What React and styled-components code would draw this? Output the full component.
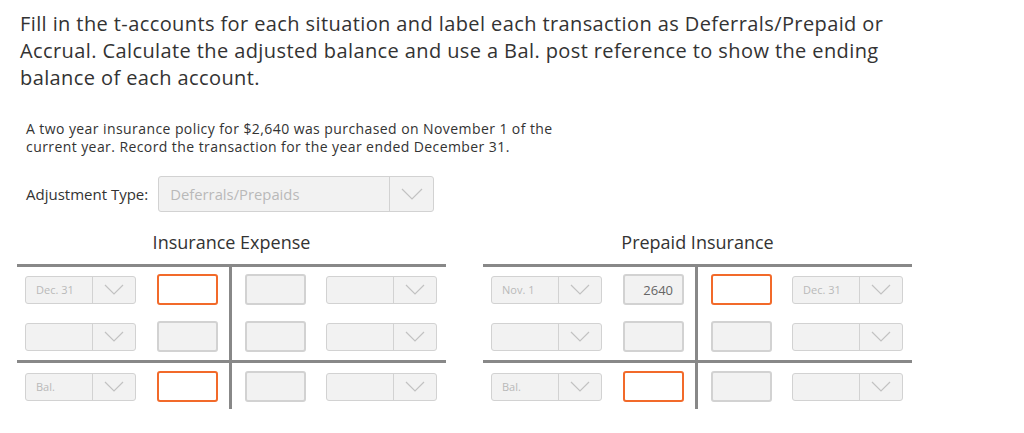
import React from "react";
import styled, { createGlobalStyle } from "styled-components";

const Global = createGlobalStyle`
  html, body { margin: 0; padding: 0; background: #fff; }
  body { font-family: "Open Sans", "Noto Sans", sans-serif; color: #333; }
`;

const Page = styled.div`
  width: 1024px;
  height: 433px;
  box-sizing: border-box;
  padding: 10px 0 0 20px;
  overflow: hidden;
`;

const Heading = styled.p`
  margin: 0;
  width: 890px;
  font-size: 20px;
  line-height: 27px;
  letter-spacing: 0.4px;
  color: #333;
`;

const Problem = styled.p`
  margin: 29px 0 0 6px;
  width: 560px;
  font-size: 14px;
  line-height: 18px;
  letter-spacing: 0.42px;
  color: #333;
`;

const AdjustRow = styled.div`
  display: flex;
  align-items: center;
  gap: 10px;
  margin: 20px 0 0 6px;
`;

const Label = styled.span`
  font-size: 15px;
  color: #333;
`;

const Select = styled.div`
  display: flex;
  width: ${(p) => p.$w}px;
  height: ${(p) => p.$h}px;
  box-sizing: border-box;
  border: 1.5px solid #d2d2d2;
  border-radius: 3px;
  background: #f2f2f2;
`;

const SelectText = styled.div`
  flex: 1;
  display: flex;
  align-items: center;
  padding-left: ${(p) => p.$pad}px;
  font-size: ${(p) => p.$fs}px;
  color: #b9b9b9;
  white-space: nowrap;
`;

const ArrowBox = styled.div`
  width: ${(p) => p.$w}px;
  border-left: 1.5px solid #d2d2d2;
  display: flex;
  align-items: center;
  justify-content: center;
`;

const Accounts = styled.div`
  display: flex;
  gap: 37px;
  margin: 18px 0 0 -3px;
`;

const Account = styled.div`
  width: 429px;
  display: flex;
  flex-direction: column;
`;

const Title = styled.div`
  text-align: center;
  font-size: 18px;
  line-height: 24px;
  color: #333;
  margin-bottom: 10px;
  padding-left: 0px;
`;

const Section = styled.div`
  display: grid;
  grid-template-columns: 212px 217px;
  border-top: 3px solid #888;
`;

const Half = styled.div`
  display: flex;
  flex-direction: column;
  gap: 16px;
  padding: ${(p) => p.$pt}px ${(p) => (p.$right ? 9 : 11)}px ${(p) => p.$pb}px
    ${(p) => (p.$right ? 13 : 8)}px;
  border-left: ${(p) => (p.$right ? "3px solid #888" : "none")};
`;

const Row = styled.div`
  display: flex;
  align-items: center;
  gap: ${(p) => (p.$right ? 20 : 21)}px;
  height: 31px;
`;

const Input = styled.div`
  width: 61px;
  height: 31px;
  box-sizing: border-box;
  border: 2px solid ${(p) => (p.$active ? "#f26a2a" : "#d2d2d2")};
  border-radius: 3px;
  background: ${(p) => (p.$active ? "#fff" : "#f2f2f2")};
  display: flex;
  align-items: center;
  justify-content: flex-end;
  padding-right: 9px;
  font-size: 13px;
  color: #666;
`;

const Chevron = ({ w = 20, h = 10 }) => (
  <svg width={w} height={h + 2} viewBox={`0 0 ${w} ${h + 2}`}>
    <polyline
      points={`1,1 ${w / 2},${h} ${w - 1},1`}
      fill="none"
      stroke="#c2c2c2"
      strokeWidth="1.2"
    />
  </svg>
);

const Drop = ({ text }) => (
  <Select $w={111} $h={28}>
    <SelectText $pad={10} $fs={11}>{text}</SelectText>
    <ArrowBox $w={42}>
      <Chevron w={20} h={10} />
    </ArrowBox>
  </Select>
);

const Cell = ({ active, value }) => <Input $active={active}>{value}</Input>;

const TAccount = ({ title, rows }) => (
  <Account>
    <Title>{title}</Title>
    <Section>
      <Half $pt={7} $pb={8}>
        {rows.slice(0, 2).map((r, i) => (
          <Row key={i}>
            <Drop text={r.ld} />
            <Cell active={r.la} value={r.lv} />
          </Row>
        ))}
      </Half>
      <Half $right $pt={7} $pb={8}>
        {rows.slice(0, 2).map((r, i) => (
          <Row key={i} $right>
            <Cell active={r.ra} value={r.rv} />
            <Drop text={r.rd} />
          </Row>
        ))}
      </Half>
    </Section>
    <Section>
      <Half $pt={8} $pb={7}>
        <Row>
          <Drop text={rows[2].ld} />
          <Cell active={rows[2].la} />
        </Row>
      </Half>
      <Half $right $pt={8} $pb={7}>
        <Row $right>
          <Cell active={rows[2].ra} />
          <Drop text={rows[2].rd} />
        </Row>
      </Half>
    </Section>
  </Account>
);

const expense = [
  { ld: "Dec. 31", la: true },
  { ld: "" },
  { ld: "Bal.", la: true },
];

const prepaid = [
  { ld: "Nov. 1", lv: "2640", ra: true, rd: "Dec. 31" },
  { ld: "" },
  { ld: "Bal.", la: true },
];

export default function App() {
  return (
    <Page>
      <Global />
      <Heading>
        Fill in the t-accounts for each situation and label each transaction as
        Deferrals/Prepaid or Accrual. Calculate the adjusted balance and use a
        Bal. post reference to show the ending balance of each account.
      </Heading>
      <Problem>
        A two year insurance policy for $2,640 was purchased on November 1 of
        the current year. Record the transaction for the year ended December 31.
      </Problem>
      <AdjustRow>
        <Label>Adjustment Type:</Label>
        <Select $w={276} $h={36}>
          <SelectText $pad={11} $fs={14.8}>Deferrals/Prepaids</SelectText>
          <ArrowBox $w={43}>
            <Chevron w={22} h={11} />
          </ArrowBox>
        </Select>
      </AdjustRow>
      <Accounts>
        <TAccount title="Insurance Expense" rows={expense} />
        <TAccount title="Prepaid Insurance" rows={prepaid} />
      </Accounts>
    </Page>
  );
}
